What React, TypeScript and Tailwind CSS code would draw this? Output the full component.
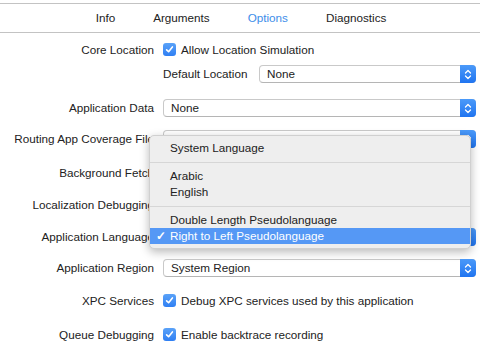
import React from "react";

const font = { fontFamily: '"Liberation Sans", Arial, sans-serif' };

function Check() {
    return (
        <span className="flex h-[13px] w-[13px] shrink-0 items-center justify-center rounded-[3px] bg-gradient-to-b from-[#5aa2f8] to-[#2f7ff3]">
            <svg width="9" height="9" viewBox="0 0 9 9">
                <path d="M1.6 4.8 L3.6 6.7 L7.4 1.9" fill="none" stroke="white" strokeWidth="1.6" strokeLinecap="round" strokeLinejoin="round" />
            </svg>
        </span>
    );
}

function Popup({ value, className = "" }: { value: string; className?: string }) {
    return (
        <div className={`flex h-[18px] items-center rounded-[4px] border border-[#c9c9c9] border-b-[#b5b5b5] bg-white ${className}`}>
            <span className="flex-1 truncate pl-[7px] text-[11.7px] text-[#222]">{value}</span>
            <span className="-mr-px flex h-[18px] w-[16px] items-center justify-center rounded-r-[4px] bg-gradient-to-b from-[#4b9af9] to-[#1f74f0]">
                <svg width="8" height="11" viewBox="0 0 8 11">
                    <path d="M1.5 4 L4 1.5 L6.5 4 M1.5 7 L4 9.5 L6.5 7" fill="none" stroke="white" strokeWidth="1.3" strokeLinecap="round" strokeLinejoin="round" />
                </svg>
            </span>
        </div>
    );
}

function Row({ label, mt, children }: { label: string; mt: string; children?: React.ReactNode }) {
    return (
        <div className={`flex h-[24px] items-center ${mt}`}>
            <div className="w-[154px] shrink-0 whitespace-nowrap text-right text-[11.7px] text-[#222]">{label}</div>
            <div className="ml-[9px] flex flex-1 items-center pr-[4px]">{children}</div>
        </div>
    );
}

export default function App() {
    const tabs = ["Info", "Arguments", "Options", "Diagnostics"];
    return (
        <div className="relative h-[350px] w-[480px] overflow-hidden bg-white" style={font}>
            {/* Tab bar */}
            <div className="mt-[3px] flex h-[30px] items-center justify-center gap-[38px] border-y border-[#c3c3c3] pl-[2px] text-[11.7px]">
                {tabs.map((t) => (
                    <span key={t} className={t === "Options" ? "text-[#3d8de9]" : "text-[#222]"}>
                        {t}
                    </span>
                ))}
            </div>

            <div className="flex flex-col">
                <Row label="Core Location" mt="mt-[5px]">
                    <Check />
                    <span className="ml-[5px] text-[11.7px] text-[#222]">Allow Location Simulation</span>
                </Row>
                <div className="flex h-[24px] items-center pl-[163px] pr-[4px]">
                    <span className="w-[96px] text-[11.7px] text-[#222]">Default Location</span>
                    <Popup value="None" className="flex-1" />
                </div>
                <Row label="Application Data" mt="mt-[10px]">
                    <Popup value="None" className="flex-1" />
                </Row>
                <Row label="Routing App Coverage File" mt="mt-[7px]">
                    <Popup value="None" className="flex-1" />
                </Row>
                <Row label="Background Fetch" mt="mt-[10px]">
                    <Check />
                </Row>
                <Row label="Localization Debugging" mt="mt-[8px]">
                    <Check />
                </Row>
                <Row label="Application Language" mt="mt-[8px]">
                    <Popup value="" className="flex-1" />
                </Row>
                <Row label="Application Region" mt="mt-[7px]">
                    <Popup value="System Region" className="flex-1" />
                </Row>
                <Row label="XPC Services" mt="mt-[9px]">
                    <Check />
                    <span className="ml-[5px] text-[11.7px] text-[#222]">Debug XPC services used by this application</span>
                </Row>
                <Row label="Queue Debugging" mt="mt-[10px]">
                    <Check />
                    <span className="ml-[5px] text-[11.7px] text-[#222]">Enable backtrace recording</span>
                </Row>
            </div>

            {/* Open popup menu */}
            <div className="absolute left-[149px] top-[135px] w-[322px] rounded-[5px] border border-[#d0d0d0] bg-[#eeeeee] py-[4px] text-[11.7px] text-[#222] shadow-[0_3px_10px_rgba(0,0,0,0.28)]">
                <div className="flex h-[16px] items-center pl-[20px]">System Language</div>
                <div className="flex h-[12px] items-center">
                    <div className="h-px w-full bg-[#d6d6d6]" />
                </div>
                <div className="flex h-[16px] items-center pl-[20px]">Arabic</div>
                <div className="flex h-[16px] items-center pl-[20px]">English</div>
                <div className="flex h-[12px] items-center">
                    <div className="h-px w-full bg-[#d6d6d6]" />
                </div>
                <div className="flex h-[16px] items-center pl-[20px]">Double Length Pseudolanguage</div>
                <div className="flex h-[16px] items-center bg-[#5598f5] text-white">
                    <span className="w-[20px] pl-[6px] font-bold">✓</span>
                    <span>Right to Left Pseudolanguage</span>
                </div>
            </div>
        </div>
    );
}
